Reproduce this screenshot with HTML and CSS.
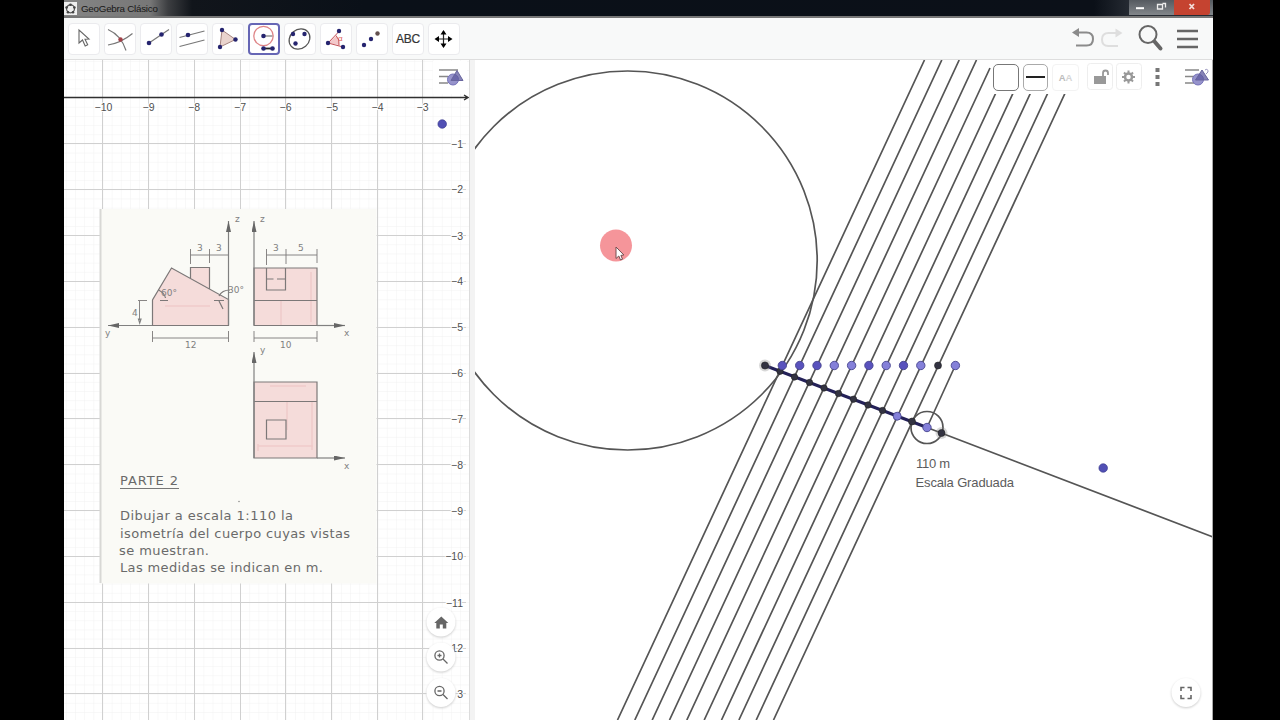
FILE: index.html
```html
<!DOCTYPE html>
<html lang="es">
<head>
<meta charset="utf-8">
<title>GeoGebra Clásico</title>
<link rel="stylesheet" href="styles.css">
</head>
<body>
<div class="app">
  <header class="titlebar">
    <div class="title"><svg class="logo" width="13" height="13" viewBox="0 0 13 13"><path class="logo-bg" d="M0 0h13v13H0z"/><circle class="logo-ring" cx="6.5" cy="6.8" r="4"/><g class="logo-dots"><circle cx="6.5" cy="2.8" r="1.3"/><circle cx="10.4" cy="5.5" r="1.3"/><circle cx="9" cy="10.3" r="1.3"/><circle cx="4" cy="10.3" r="1.3"/><circle cx="2.6" cy="5.5" r="1.3"/></g></svg><span>GeoGebra Clásico</span></div>
    <div class="win"><svg class="win-icons" width="81" height="16" viewBox="0 0 81 16"><path class="close" d="M45 0h36v12q0 3-3 3H45z"/><path class="win-line" d="M7 8.200h8"/><path class="win-box" d="M28.500 4.500h5v4.500h-5zM33.500 3.500h3v4"/><path class="win-x" d="M60.500 4l4.500 5M65 4l-4.500 5"/></svg></div>
  </header>
  <nav class="toolbar">
    <div class="tools">
      <button class="tool"><svg viewBox="0 0 32 32"><path class="arrow" d="M11 7v13l3.500-3 2.700 6 2.500-1.200-2.700-5.500 4-.3z"/></svg></button>
      <button class="tool"><svg viewBox="0 0 32 32"><path class="stroke" d="M4 6.500C12 10 19 18 22 27.500M4 22Q17 20 28.500 10.500"/><circle class="red-dot" cx="16.500" cy="16.500" r="2.200"/></svg></button>
      <button class="tool"><svg viewBox="0 0 32 32"><path class="stroke" d="M9 20L29 6.500"/><circle class="dot" cx="9" cy="20" r="2.300"/><circle class="dot" cx="21.500" cy="11.500" r="2.300"/></svg></button>
      <button class="tool"><svg viewBox="0 0 32 32"><path class="stroke" d="M3.500 14.500L28.500 8M3.500 23.500L28.500 17"/><circle class="dot" cx="12" cy="12" r="2.300"/></svg></button>
      <button class="tool"><svg viewBox="0 0 32 32"><path class="tri" d="M10 7l13.500 9.500L8 24z"/><circle class="dot" cx="10" cy="7" r="2.200"/><circle class="dot" cx="23.500" cy="16.500" r="2.200"/><circle class="dot" cx="8" cy="24" r="2.200"/></svg></button>
      <button class="tool selected"><svg viewBox="0 0 32 32"><circle class="red-ring" cx="15.500" cy="13" r="9.700"/><path class="stroke" d="M15.500 13h9"/><path class="thick" d="M15.500 25.500h9"/><circle class="dot" cx="15.500" cy="13" r="2.300"/><circle class="dot" cx="15.500" cy="25.500" r="2.300"/><circle class="dot" cx="24.500" cy="25.500" r="2.300"/></svg></button>
      <button class="tool"><svg viewBox="0 0 32 32"><ellipse class="stroke dark" cx="15.500" cy="16" rx="11" ry="9.500" transform="rotate(-40 15.500 16)"/><circle class="dot" cx="9" cy="11" r="2.200"/><circle class="dot" cx="20.500" cy="11" r="2.200"/><circle class="dot" cx="11.500" cy="20.500" r="2.200"/></svg></button>
      <button class="tool"><svg viewBox="0 0 32 32"><path class="angle" d="M8 20l8-7q4 4 3 9z"/><path class="red-line" d="M19 8.500L8 20l15 4M16 12.500q4 4 3 10"/><text class="alpha" x="18" y="18">α</text><circle class="dot" cx="19" cy="8" r="2.200"/><circle class="dot" cx="8" cy="20" r="2.200"/><circle class="dot" cx="23" cy="24" r="2.200"/></svg></button>
      <button class="tool"><svg viewBox="0 0 32 32"><circle class="dot" cx="8" cy="22" r="2.200"/><circle class="dot" cx="15" cy="16" r="2.200"/><circle class="brown-dot" cx="21.500" cy="10.500" r="2.200"/></svg></button>
      <button class="tool word">ABC</button>
      <button class="tool"><svg viewBox="0 0 32 32"><path class="move-line" d="M8 16h15M15.500 8v16"/><path d="M6.500 16l4.500-3v6zM24.500 16l-4.500-3v6zM15.500 7l-3 4.500h6zM15.500 25l-3-4.500h6z"/></svg></button>
    </div>
    <svg class="actions" width="130" height="32" viewBox="0 0 130 32"><g class="undo"><path d="M7 9.500h9.500q6.500 0 6.500 6.500t-6.500 6.500H6"/><path class="undo-head" d="M2 9.500l7-4.500v9z"/></g><g class="redo"><path d="M48 10H38.500Q32 10 32 16.500T38.500 23H48"/><path class="redo-head" d="M52.500 10l-7-4.500v9z"/></g><g class="search"><circle cx="78" cy="11.500" r="8.500"/><path class="handle" d="M84.500 18.500l6 7"/></g><path class="burger" d="M107 8h21M107 16h21M107 24h21"/></svg>
  </nav>
  <main class="views">
    <section class="view left">
      <svg class="canvas" width="405" height="660" viewBox="64 60 405 660">
        <defs>
          <pattern id="minor" x="102.500" y="97.600" width="9.170" height="9.170" patternUnits="userSpaceOnUse"><path class="minor" d="M0 0V9.170M0 0H9.170"/></pattern>
          <marker id="tip" markerWidth="14" markerHeight="8" refX="11" refY="2.500" orient="auto" markerUnits="userSpaceOnUse"><path d="M0 0L11 2.500 0 5z" fill="#666"/></marker>
        </defs>
        <rect x="64" y="60" width="405" height="660" fill="url(#minor)"/>
        <path class="major" d="M102.500 60V720M148.500 60V720M194.500 60V720M240.500 60V720M285.500 60V720M331.500 60V720M377.500 60V720M422.500 60V720M64 143.500H466M64 189.500H466M64 235.500H466M64 281.500H466M64 327.500H466M64 373.500H466M64 418.500H466M64 464.500H466M64 510.500H466M64 556.500H466M64 602.500H466M64 648.500H466M64 693.500H466"/>
        <path class="axis" d="M64 97.500H467M464 95l4 2.500-4 2.500"/>
        <g class="labels" text-anchor="middle"><text x="103.500" y="110.500">−10</text><text x="148.500" y="110.500">−9</text><text x="194" y="110.500">−8</text><text x="240" y="110.500">−7</text><text x="285.500" y="110.500">−6</text><text x="332" y="110.500">−5</text><text x="377.500" y="110.500">−4</text><text x="422.500" y="110.500">−3</text></g>
        <g class="labels" text-anchor="end"><text x="463" y="147.500">−1</text><text x="463" y="193">−2</text><text x="463" y="239.500">−3</text><text x="463" y="285">−4</text><text x="463" y="331">−5</text><text x="463" y="377">−6</text><text x="463" y="422.500">−7</text><text x="463" y="468.500">−8</text><text x="463" y="514.500">−9</text><text x="463" y="560">−10</text><text x="463" y="606.500">−11</text><text x="463" y="652">12</text><text x="463" y="697.500">3</text></g>
        <circle class="point-dark" cx="442.200" cy="124" r="4.300"/>
        <rect class="panel-tab" x="433" y="61" width="34" height="33"/>
        <path class="style-lines" d="M439 70h19M439 76.500h9M439 83h9"/><circle class="style-circle" cx="453" cy="79.500" r="5.500"/><path class="style-tri" d="M457 70.500l6 10h-12z"/>

        <rect class="paper" x="100" y="209" width="276.500" height="374.500"/>
        <path class="paper-edge" d="M100.500 209V583"/>
        <g class="pink"><path d="M152.500 325V300L171.500 268l57 32v25zM190.500 278.500V268h19v21.500z"/><path d="M254 268h63v57.500h-63zM254 382h63v76h-63z"/></g>
        <g class="hatch"><path d="M281 301v24M311 272v50M287 402v28M312 402v48M258 446h55M258 451v-7M270 386h36M165 306h45"/></g>
        <g class="ink">
          <path d="M152.500 325.500V300L171.500 268l57 31.500v26zM190.500 278V267.500h19V289"/>
          <path d="M254 268h63v57.500h-63zM254 300.500h63M266.500 268v22h19v-22"/>
          <path d="M266.500 279h7M277 279h8" />
          <path d="M254 382h63v76h-63zM254 401.500h63M266.500 420h19.500v19h-19.500z"/>
          <path d="M160 300.500h8M214 300.500h10M219 301l4 8M158.500 290q6 3 7 8M219 296q3-6 11-6"/>
          <path class="thin" d="M190.500 255h38M190.500 249v15M209.500 249v14M266.500 255h50.500M266.500 249v16M286 249v15M317 249v14M138 300.500h9M139.500 301v19M152.500 338h76M152.500 331v11M228.500 331v11M254 338h63M254 331v11M317 331v11"/>
        </g>
        <g class="ink vectors"><path marker-end="url(#tip)" d="M228.500 325V221"/><path marker-end="url(#tip)" d="M254 325V221"/><path marker-end="url(#tip)" d="M152 325.500H108"/><path marker-end="url(#tip)" d="M317 325.500h28"/><path marker-end="url(#tip)" d="M254 458V352"/><path marker-end="url(#tip)" d="M317 458h28"/><path d="M138.500 319h2.500l-1.300 4z"/></g>
        <g class="dims"><text x="235" y="222">z</text><text x="260" y="222">z</text><text x="105" y="336">y</text><text x="344" y="336">x</text><text x="344" y="469">x</text><text x="260" y="353">y</text><text x="197" y="251">3</text><text x="216" y="251">3</text><text x="273" y="251">3</text><text x="298" y="251">5</text><text x="132" y="316">4</text><text x="185" y="348">12</text><text x="280" y="348">10</text><text x="161" y="296">60°</text><text x="228" y="293">30°</text></g>
        <g class="copy"><text x="120" y="485" textLength="58">PARTE 2</text><text x="120" y="519.500" textLength="173">Dibujar a escala 1:110 la</text><text x="120" y="537.500" textLength="230">isometría del cuerpo cuyas vistas</text><text x="119" y="554.500" textLength="90">se muestran.</text><text x="120" y="571.500" textLength="203">Las medidas se indican en m.</text></g>
        <path class="underline" d="M120 488.500h59"/><circle cx="239" cy="501.500" r=".7" fill="#777"/>
        <g class="round"><circle cx="441" cy="622" r="14.500"/><circle cx="441" cy="657" r="14.500"/><circle cx="441" cy="692.500" r="14.500"/></g>
        <path class="home" d="M441.300 616.500l7 6.500h-2v5.500h-3.500v-4h-3v4h-3.500V623h-2z"/>
        <g class="zoom"><circle cx="439.500" cy="655.500" r="4.600"/><path d="M443 659l4.500 4.500M437.500 655.500h4M439.500 653.500v4"/><circle cx="439.500" cy="691" r="4.600"/><path d="M443 694.500l4.500 4.500M437.500 691h4"/></g>
      </svg>
    </section>
    <div class="divider"></div>
    <section class="view right">
      <svg class="canvas" width="738" height="660" viewBox="475 60 738 660">
        <g class="geo">
          <circle cx="627.700" cy="260.500" r="189.500"/>
          <path d="M617.500 720L924.500 60M634.800 720L941.800 60M652.200 720L959.200 60M669.500 720L976.500 60M686.800 720L990 68M704.200 720L1011.200 60M721.500 720L1028.500 60M738.900 720L1045.900 60M756.200 720L1063.200 60M773.500 720L1080.500 60M955.300 365.500L927 427.500M765 365.500L1213 537"/>
          <circle cx="927" cy="427.500" r="16"/>
        </g>
        <path class="scale" d="M765 365.500L927 427.500"/>
        <g class="halo"><circle cx="765" cy="365.500" r="6"/><circle cx="941.500" cy="433" r="6"/></g>
        <g class="points-black"><circle cx="765" cy="365.500" r="3.600"/><circle cx="780" cy="371.300" r="3.200"/><circle cx="794.500" cy="377" r="3.200"/><circle cx="809.500" cy="382.500" r="3.200"/><circle cx="824" cy="388" r="3.200"/><circle cx="838.500" cy="393.500" r="3.200"/><circle cx="853.500" cy="399.200" r="3.200"/><circle cx="868" cy="405" r="3.200"/><circle cx="882.500" cy="410.500" r="3.200"/><circle cx="912" cy="421.500" r="3.500"/><circle cx="941.500" cy="433" r="3.500"/><circle cx="938" cy="365.500" r="3.500"/></g>
        <g class="points"><circle class="deep" cx="782.300" cy="365.500" r="4.200"/><circle class="deep" cx="799.700" cy="365.500" r="4.200"/><circle class="deep" cx="817" cy="365.500" r="4.200"/><circle cx="834.300" cy="365.500" r="4.200"/><circle cx="851.600" cy="365.500" r="4.200"/><circle class="deep" cx="868.900" cy="365.500" r="4.200"/><circle cx="886.200" cy="365.500" r="4.200"/><circle class="deep" cx="903.500" cy="365.500" r="4.200"/><circle cx="920.800" cy="365.500" r="4.200"/><circle cx="955.400" cy="365.500" r="4.200"/><circle cx="897.200" cy="416.200" r="4"/><circle cx="927" cy="427.500" r="4.200"/></g>
        <circle class="point-dark" cx="1103.200" cy="468" r="4.300"/>
        <g class="caption"><text x="916" y="468" textLength="34">110 m</text><text x="915.500" y="487" textLength="98.500">Escala Graduada</text></g>
        <circle class="touch" cx="616" cy="245.500" r="16"/>
        <path class="cursor" d="M616 247v11.500l2.800-2.500 1.700 4 2-.8-1.600-3.800 3-.4z"/>
        <g class="round"><circle cx="1186" cy="692.500" r="14.500"/></g><path class="full" d="M1181 691v-3.500h3.500M1187.500 687.500h3.500v3.500M1191 695v3.500h-3.500M1184.500 698.500h-3.500v-3.500"/>
      </svg>
      <div class="stylebar">
        <button class="swatch"></button>
        <button class="swatch line"><span></span></button>
        <button class="style aa"><span>A</span>A</button>
        <svg class="style-icons" width="124" height="34" viewBox="1086 60 124 34"><g class="frames"><rect x="1086.500" y="63.500" width="25" height="26" rx="3"/><rect x="1115.500" y="63.500" width="25" height="26" rx="3"/></g><path class="lock" d="M1093 76h12v8h-12z"/><path class="shackle" d="M1102 76v-3q0-2.500 2.500-2.500t2.500 2.500v2"/><circle class="gear" cx="1127.500" cy="77" r="3.500"/><path class="teeth" d="M1127.500 70.500v3M1127.500 80.500v3M1121 77h3M1131 77h3M1123 72.500l2 2M1130 79.500l2 2M1132 72.500l-2 2M1125 79.500l-2 2"/><path class="more" d="M1154.500 68h4v4h-4zm0 7h4v4h-4zm0 7h4v4h-4z"/><path class="style-lines" d="M1184 70h14M1184 76.500h9M1184 83h9"/><circle class="style-circle" cx="1197" cy="79.500" r="5.500"/><path class="style-tri" d="M1201 70l6.500 10h-13z"/><path class="style-tick" d="M1204 70q3-2 3 2l-2 2"/></svg>
      </div>
    </section>
  </main>
</div>
</body>
</html>
```
FILE: styles.css
```css
* { box-sizing: border-box; }
body { margin: 0; height: 720px; overflow: hidden; background: #000; font-family: "Liberation Sans", Arial, sans-serif; }
.app { width: 1149px; height: 720px; margin-left: 64px; display: flex; flex-direction: column; background: #fff; }
.titlebar { height: 18px; flex: none; display: flex; justify-content: space-between; background: linear-gradient(90deg, #858585 0, #777 86px, #3c3e41 104px, #11151b 128px, #0a1018 300px, #0b1018 1030px, #252a32 1065px); border-bottom: 2px solid #777; }
.title { display: flex; align-items: center; gap: 4px; height: 17px; color: #171717; font-size: 9.8px; white-space: nowrap; letter-spacing: -.25px; }
.logo-bg { fill: #eee; }
.logo-ring { fill: none; stroke: #555; stroke-width: 1.2; }
.logo-dots { fill: #444; }
.win { width: 84px; height: 15px; background: linear-gradient(#555a60, #82868a); }
.win-icons { display: block; }
.close { fill: #c54330; }
.win-line { stroke: #fff; stroke-width: 2; }
.win-box { fill: none; stroke: #eee; stroke-width: 1.3; }
.win-x { stroke: #f3dcd8; stroke-width: 1.8; }
.toolbar { height: 42px; flex: none; padding: 5px 13px 0 4px; display: flex; justify-content: space-between; background: #f8f9f9; border-bottom: 1px solid #dedede; }
.tools { display: flex; gap: 4px; }
.tool { width: 32px; height: 32px; padding: 0; border: 1px solid #ebebee; border-radius: 4px; background: #fff; display: flex; align-items: center; justify-content: center; }
.tool svg { width: 32px; height: 32px; flex: none; }
.tool.selected { border: 2px solid #6666b5; }
.word { font: 12px "Liberation Sans", sans-serif; letter-spacing: -.3px; color: #333; -webkit-text-stroke: .2px #333; }
.arrow { fill: #fff; stroke: #666; stroke-width: 1.1; }
.stroke { fill: none; stroke: #777; stroke-width: 1.2; }
.dark { stroke: #555; }
.dot { fill: #25246f; }
.red-dot { fill: #a14148; }
.brown-dot { fill: #63504e; }
.tri { fill: #ead4ce; stroke: #a5837e; }
.red-ring { fill: none; stroke: #df8587; stroke-width: 1.3; }
.thick { stroke: #222; stroke-width: 1.8; }
.angle { fill: #f4c8ca; }
.red-line { fill: none; stroke: #c45157; }
.alpha { font: 8px "Liberation Sans", sans-serif; fill: #d55; }
.move-line { stroke: #222; stroke-width: 1.2; }
.actions { width: 130px; height: 32px; }
.undo, .redo { fill: none; stroke: #8b8b8b; stroke-width: 2; }
.undo-head { fill: #8b8b8b; stroke: none; }
.redo { stroke: #dedede; }
.redo-head { fill: #dedede; stroke: none; }
.search { fill: none; stroke: #666; stroke-width: 2; }
.handle { stroke-width: 4; stroke-linecap: round; }
.burger { stroke: #666; stroke-width: 2.5; }
.views { display: flex; height: 660px; }
.view { position: relative; height: 660px; overflow: hidden; background: #fff; }
.left { width: 405px; }
.right { width: 738px; border-right: 1px solid #aaa; }
.canvas { display: block; }
.divider { width: 6px; background: #f3f3f3; border-left: 1px solid #dcdcdc; }
.minor { fill: none; stroke: #eee; stroke-width: .8; }
.major { fill: none; stroke: #d0d0d0; }
.axis { fill: none; stroke: #303030; stroke-width: 1.3; }
.labels { font: 10.5px "Liberation Sans", sans-serif; fill: #505050; stroke: #fff; stroke-width: 2px; paint-order: stroke; }
.point-dark { fill: #5150b4; stroke: #343488; stroke-width: .6; }
.panel-tab { fill: #fff; }
.style-lines { fill: none; stroke: #888; stroke-width: 1.7; }
.style-circle { fill: #9693cb; stroke: #7774b9; }
.style-tri { fill: #5d599f; fill-opacity: .75; stroke: #68659e; }
.style-tick { fill: none; stroke: #9996be; }
.paper { fill: #fafaf6; }
.paper-edge { stroke: #d8d8d5; stroke-width: 2; }
.pink { fill: #f5dcda; }
.hatch { fill: none; stroke: #eab9b9; stroke-width: 1.4; opacity: .5; }
.ink { fill: none; stroke: #7c7878; stroke-width: 1.2; }
.thin { stroke-width: .9; }
.vectors { stroke: #808080; }
.dims { font: 9px "DejaVu Sans", sans-serif; fill: #808080; }
.copy { font: 13px "DejaVu Sans", sans-serif; fill: #6a6a6a; }
.underline { stroke: #777; }
.round { fill: #fff; stroke: none; filter: drop-shadow(0 1px 1px #ccc); }
.home { fill: #666; }
.zoom { fill: none; stroke: #666; stroke-width: 1.3; }
.geo { fill: none; stroke: #555; stroke-width: 1.7; }
.scale { stroke: #242158; stroke-width: 3; }
.halo { fill: #777; opacity: .28; }
.points-black { fill: #333342; stroke: #222; stroke-width: .6; }
.points { fill: #8480d9; stroke: #47458f; stroke-width: .9; }
.deep { fill: #5952bd; }
.caption { font: 13px "Liberation Sans", sans-serif; fill: #5c5c5c; }
.touch { fill: #f5959a; }
.cursor { fill: #fff; stroke: #754e50; stroke-width: 1; }
.full { fill: none; stroke: #666; stroke-width: 1.6; }
.stylebar { position: absolute; right: 0; top: 0; width: 219px; height: 34px; display: flex; align-items: center; background: #fff; }
.swatch { width: 26px; height: 27px; flex: none; padding: 0; border: 1.5px solid #777; border-radius: 5px; background: #fff; }
.line { width: 25px; margin-left: 4px; border-color: #aaa; display: flex; align-items: center; justify-content: center; }
.line span { width: 19px; height: 2px; background: #222; }
.style { width: 27px; height: 27px; margin: 0 8px 0 4px; flex: none; padding: 0; border: 1px solid #f3f3f3; border-radius: 4px; background: #fff; }
.aa { font: bold 9.5px "Liberation Sans", sans-serif; color: #d5d5d5; }
.aa span { color: #bbb; }
.style-icons { flex: none; }
.frames { fill: #fff; stroke: #eee; }
.lock { fill: #999; }
.shackle { fill: none; stroke: #999; stroke-width: 1.8; }
.gear { fill: none; stroke: #999; stroke-width: 2.5; }
.teeth { stroke: #999; stroke-width: 2; }
.more { fill: #777; }
```
